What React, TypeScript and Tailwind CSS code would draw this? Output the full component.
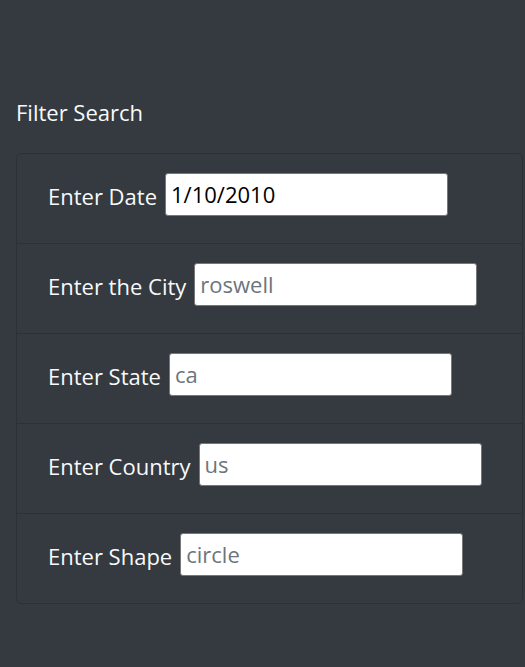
const fields = [
  { label: 'Enter Date', value: '1/10/2010', placeholder: '' },
  { label: 'Enter the City', value: '', placeholder: 'roswell' },
  { label: 'Enter State', value: '', placeholder: 'ca' },
  { label: 'Enter Country', value: '', placeholder: 'us' },
  { label: 'Enter Shape', value: '', placeholder: 'circle' },
];

export default function App() {
  return (
    <div
      className="min-h-screen w-[525px] bg-[#343a40] text-[#f8f9fa] pt-[96px]"
      style={{ fontFamily: '"Open Sans", "Noto Sans", sans-serif' }}
    >
      <h2 className="ml-4 text-[22px] leading-[32px] mb-[25px]">Filter Search</h2>
      <ul className="ml-4 w-[507px] rounded-[5px] border border-[#2c3136]">
        {fields.map((f, i) => (
          <li
            key={f.label}
            className={
              'flex items-center pl-[31px] pb-[4px] ' + (i > 0 ? 'border-t border-[#2c3136] h-[90px]' : 'h-[89px]')
            }
          >
            <label className="text-[22px] mr-2 whitespace-nowrap">{f.label}</label>
            <input
              defaultValue={f.value}
              placeholder={f.placeholder}
              className="w-[283px] h-[43px] mb-[5px] bg-white rounded-[3px] border border-[#777] px-[5px] text-[22px] text-black placeholder:text-[#6c757d] outline-none"
            />
          </li>
        ))}
      </ul>
    </div>
  );
}
